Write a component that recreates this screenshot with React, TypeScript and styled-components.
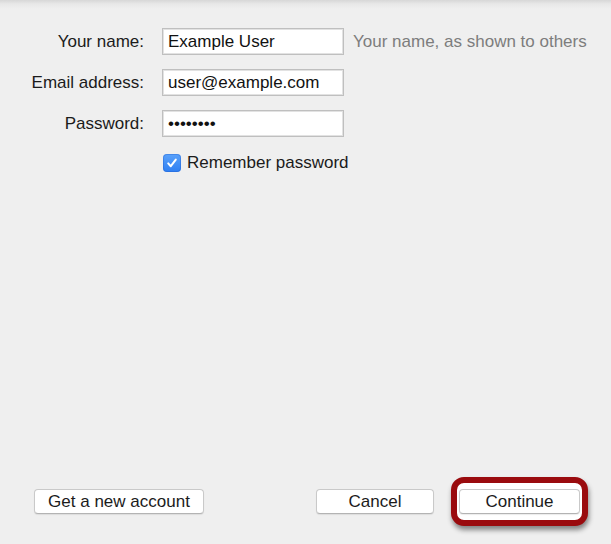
import React from "react";
import styled, {createGlobalStyle} from "styled-components";

const GlobalStyle = createGlobalStyle`
  html, body {
    margin: 0;
    padding: 0;
    background: #efefef;
  }
  * {
    box-sizing: border-box;
  }
`;

const Sheet = styled.div`
  width: 611px;
  height: 544px;
  display: flex;
  flex-direction: column;
  background: linear-gradient(#d7d7d7 0px, #e8e8e8 4px, #efefef 9px, #efefef 100%);
  font-family: "Liberation Sans", Arial, Helvetica, sans-serif;
  font-size: 17px;
  color: #1b1b1b;
`;

const Form = styled.div`
  display: grid;
  grid-template-columns: 144px 182px auto;
  grid-auto-rows: 27px;
  column-gap: 18px;
  row-gap: 14px;
  padding-top: 28px;
  align-items: center;
`;

const Label = styled.label`
  text-align: right;
  white-space: nowrap;
`;

const Field = styled.input`
  width: 182px;
  height: 27px;
  margin: 0;
  padding: 1px 5px 0;
  border: 1px solid #bfbfbf;
  box-shadow: inset 0 0 0 1px #e2e2e2;
  border-radius: 0;
  background: #ffffff;
  font-family: inherit;
  font-size: 17px;
  color: #111111;
  outline: none;
`;

const Hint = styled.span`
  margin-left: -9px;
  color: #7d7d7d;
  white-space: nowrap;
`;

const CheckRow = styled.label`
  grid-column: 2 / span 2;
  align-self: start;
  display: flex;
  align-items: center;
  gap: 6px;
  margin-top: 2px;
  margin-left: 1px;
  white-space: nowrap;
`;

const Box = styled.span`
  width: 18px;
  height: 18px;
  border-radius: 4px;
  background: linear-gradient(#5aa2fb, #2f7ff2);
  display: inline-flex;
  align-items: center;
  justify-content: center;
  box-shadow: inset 0 0 0 1px rgba(30, 90, 200, 0.35);
`;

const Filler = styled.div`
  flex: 1;
`;

const Footer = styled.div`
  display: flex;
  align-items: center;
  gap: 17px;
  padding: 0 23px 18px 34px;
`;

const Button = styled.button<{$w: number}>`
  width: ${(p) => p.$w}px;
  height: 25px;
  margin: 0;
  padding: 0;
  background: #ffffff;
  border: 1px solid #c9c9c9;
  border-bottom-color: #b3b3b3;
  border-radius: 4px;
  box-shadow: 0 1px 1px rgba(0, 0, 0, 0.08);
  font-family: inherit;
  font-size: 17px;
  color: #1b1b1b;
  line-height: 23px;
`;

const Push = styled.div`
  margin-left: auto;
`;

const Highlight = styled.div`
  display: flex;
  align-items: center;
  padding: 6px 2px;
  border: 6px solid #9a0b0e;
  border-radius: 13px;
  background: #ffffff;
  box-shadow: 1px 4px 5px rgba(0, 0, 0, 0.45);
`;

export default function App() {
  return (
    <>
      <GlobalStyle />
      <Sheet>
        <Form>
          <Label>Your name:</Label>
          <Field readOnly defaultValue="Example User" />
          <Hint>Your name, as shown to others</Hint>

          <Label>Email address:</Label>
          <Field readOnly defaultValue="user@example.com" />
          <span />

          <Label>Password:</Label>
          <Field readOnly defaultValue="••••••••" />
          <span />

          <span />
          <CheckRow>
            <Box>
              <svg width="12" height="12" viewBox="0 0 12 12">
                <path
                  d="M2.2 6.4 L4.8 9.2 L9.8 2.6"
                  fill="none"
                  stroke="#ffffff"
                  strokeWidth="2"
                  strokeLinecap="round"
                  strokeLinejoin="round"
                />
              </svg>
            </Box>
            Remember password
          </CheckRow>
        </Form>
        <Filler />
        <Footer>
          <Button $w={170}>Get a new account</Button>
          <Push />
          <Button $w={118}>Cancel</Button>
          <Highlight>
            <Button $w={121}>Continue</Button>
          </Highlight>
        </Footer>
      </Sheet>
    </>
  );
}
